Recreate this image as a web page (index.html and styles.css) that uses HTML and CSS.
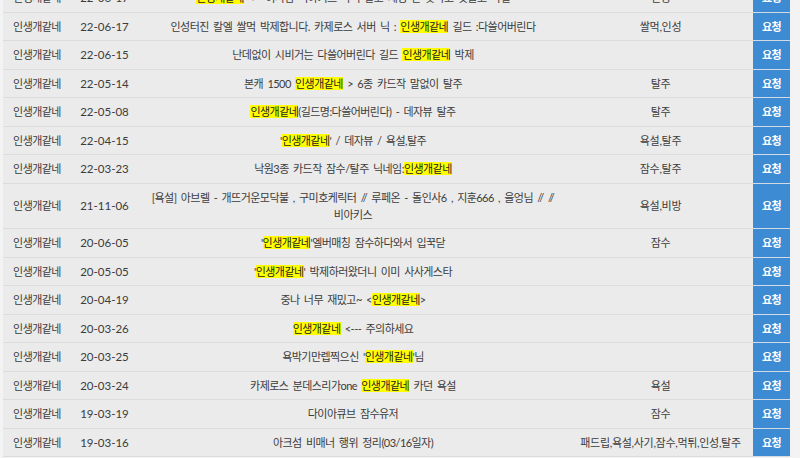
FILE: index.html
```html
<!DOCTYPE html>
<html lang="ko">
<head>
<meta charset="utf-8">
<title>검색 결과</title>
<link rel="stylesheet" href="styles.css">
</head>
<body>
<div class="viewport">
  <table class="list">
    <colgroup>
      <col class="c-nick"><col class="c-date"><col class="c-text"><col class="c-tag"><col class="c-btn">
    </colgroup>
    <tbody>
      <tr><td class="nick">인생개같네</td><td class="date">22-06-17</td><td class="text"><mark>인생개같네</mark> &lt;-- 이사람 비아키스 파티 팔고 세팅 안 맞다고 잇블고 욕설</td><td class="tag">인성</td><td class="btn">요청</td></tr>
      <tr><td class="nick">인생개같네</td><td class="date">22-06-17</td><td class="text">인성터진 칼엘 쌀먹 박제합니다. 카제로스 서버 닉 : <mark>인생개같네</mark> 길드 :다쓸어버린다</td><td class="tag">쌀먹,인성</td><td class="btn">요청</td></tr>
      <tr><td class="nick">인생개같네</td><td class="date">22-06-15</td><td class="text">난데없이 시비거는 다쓸어버린다 길드 <mark>인생개같네</mark> 박제</td><td class="tag"></td><td class="btn">요청</td></tr>
      <tr><td class="nick">인생개같네</td><td class="date">22-05-14</td><td class="text">본캐 1500 <mark>인생개같네</mark> &gt; 6종 카드작 말없이 탈주</td><td class="tag">탈주</td><td class="btn">요청</td></tr>
      <tr><td class="nick">인생개같네</td><td class="date">22-05-08</td><td class="text"><mark>인생개같네</mark>(길드명:다쓸어버린다) - 데자뷰 탈주</td><td class="tag">탈주</td><td class="btn">요청</td></tr>
      <tr><td class="nick">인생개같네</td><td class="date">22-04-15</td><td class="text">'<mark>인생개같네</mark>' / 데자뷰 / 욕설,탈주</td><td class="tag">욕설,탈주</td><td class="btn">요청</td></tr>
      <tr><td class="nick">인생개같네</td><td class="date">22-03-23</td><td class="text">낙원3종 카드작 잠수/탈주 닉네임:<mark>인생개같네</mark></td><td class="tag">잠수,탈주</td><td class="btn">요청</td></tr>
      <tr><td class="nick">인생개같네</td><td class="date">21-11-06</td><td class="text">[욕설] 아브렐 - 개뜨거운모닥불 , 구미호케릭터 // 루페온 - 돌인사6 , 지훈666 , 을엉님 // //<br>비아키스</td><td class="tag">욕설,비방</td><td class="btn">요청</td></tr>
      <tr><td class="nick">인생개같네</td><td class="date">20-06-05</td><td class="text">'<mark>인생개같네</mark>'엘버매칭 잠수하다와서 입꾹닫</td><td class="tag">잠수</td><td class="btn">요청</td></tr>
      <tr><td class="nick">인생개같네</td><td class="date">20-05-05</td><td class="text">'<mark>인생개같네</mark>' 박제하러왔더니 이미 사사게스타</td><td class="tag"></td><td class="btn">요청</td></tr>
      <tr><td class="nick">인생개같네</td><td class="date">20-04-19</td><td class="text">중나 너무 재밌고~ &lt;<mark>인생개같네</mark>&gt;</td><td class="tag"></td><td class="btn">요청</td></tr>
      <tr><td class="nick">인생개같네</td><td class="date">20-03-26</td><td class="text"><mark>인생개같네</mark> &lt;--- 주의하세요</td><td class="tag"></td><td class="btn">요청</td></tr>
      <tr><td class="nick">인생개같네</td><td class="date">20-03-25</td><td class="text">욕박기만렙찍으신 '<mark>인생개같네</mark>'님</td><td class="tag"></td><td class="btn">요청</td></tr>
      <tr><td class="nick">인생개같네</td><td class="date">20-03-24</td><td class="text">카제로스 분데스리가one <mark>인생개같네</mark> 카던 욕설</td><td class="tag">욕설</td><td class="btn">요청</td></tr>
      <tr><td class="nick">인생개같네</td><td class="date">19-03-19</td><td class="text">다이아큐브 잠수유저</td><td class="tag">잠수</td><td class="btn">요청</td></tr>
      <tr><td class="nick">인생개같네</td><td class="date">19-03-16</td><td class="text">아크섬 비매너 행위 정리(03/16일자)</td><td class="tag">패드립,욕설,사기,잠수,먹튀,인성,탈주</td><td class="btn">요청</td></tr>
    </tbody>
  </table>
</div>
</body>
</html>
```

FILE: styles.css
```css
html, body {
  margin: 0;
  padding: 0;
  background: #f3f3f3;
  height: 100%;
  overflow: hidden;
}

.viewport {
  padding: 0 10px 0 3px;
  margin-top: -16px;
}

.list {
  width: 787px;
  table-layout: fixed;
  border-collapse: collapse;
  background: #ebebeb;
  font-family: Lato, "Noto Sans CJK KR", sans-serif;
  font-size: 11px;
  color: #3c3c3c;
}

.c-nick { width: 68px; }
.c-date { width: 67px; }
.c-text { width: 430px; }
.c-tag  { width: 185px; }
.c-btn  { width: 37px; }

.list td {
  padding: 5.25px 4px;
  line-height: 17px;
  text-align: center;
  vertical-align: middle;
  border-bottom: 1px solid #dcdcdc;
  letter-spacing: -0.55px;
  word-spacing: 2px;
}

.list td.date {
  font-size: 11.5px;
  letter-spacing: 0;
  word-spacing: 0;
}

.list td.tag {
  white-space: nowrap;
  padding: 5.25px 0;
  letter-spacing: -0.3px;
}

.list td.btn {
  background: #3d8bd2;
  color: #fff;
  font-weight: 700;
  padding: 5.25px 0;
  border-bottom: 1px solid #d5dbe2;
}

mark {
  background: #ffff00;
  color: #222;
}
```
